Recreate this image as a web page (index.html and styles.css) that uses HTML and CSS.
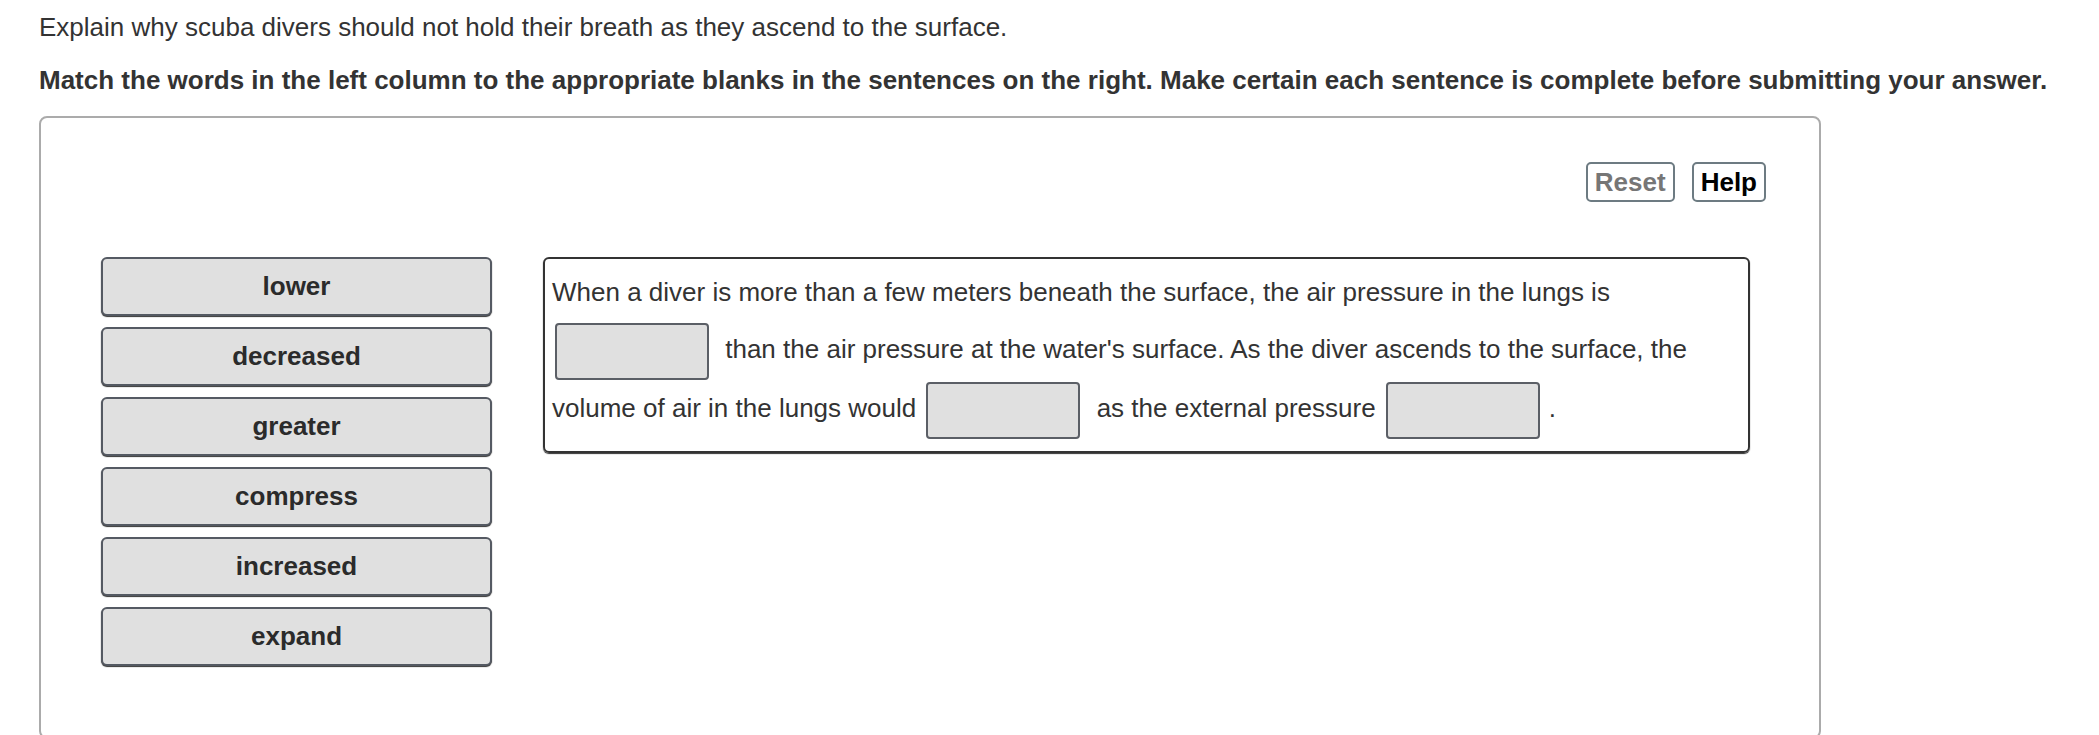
FILE: index.html
```html
<!DOCTYPE html>
<html lang="en">
<head>
    <meta charset="UTF-8">
    <meta name="viewport" content="width=device-width, initial-scale=1.0">
    <title>Scuba Divers - Matching</title>
    <link rel="stylesheet" href="styles.css">
</head>
<body>
    <p class="question">Explain why scuba divers should not hold their breath as they ascend to the surface.</p>
    <p class="instructions">Match the words in the left column to the appropriate blanks in the sentences on the right. Make certain each sentence is complete before submitting your answer.</p>

    <!-- Drag and drop activity -->
    <div class="activity">
        <div class="toolbar">
            <button class="tool-btn reset">Reset</button>
            <button class="tool-btn help">Help</button>
        </div>

        <div class="workspace">
            <div class="word-bank">
                <div class="word">lower</div>
                <div class="word">decreased</div>
                <div class="word">greater</div>
                <div class="word">compress</div>
                <div class="word">increased</div>
                <div class="word">expand</div>
            </div>

            <div class="sentences">
                <p>When a diver is more than a few meters beneath the surface, the air pressure in the lungs is <span class="blank"></span> than the air pressure at the water's surface. As the diver ascends to the surface, the volume of air in the lungs would <span class="blank"></span> as the external pressure <span class="blank"></span>.</p>
            </div>
        </div>
    </div>
</body>
</html>
```

FILE: styles.css
```css
* {
    box-sizing: border-box;
}

body {
    margin: 0;
    padding: 0 39px;
    background-color: #fff;
    color: #333;
    font-family: "Liberation Sans", Arial, Helvetica, sans-serif;
    font-size: 26px;
}

.question {
    margin: 12px 0 0;
    line-height: 30px;
}

.instructions {
    margin: 23px 0 0;
    line-height: 30px;
    font-weight: bold;
}

/* Activity frame */
.activity {
    margin-top: 21px;
    width: 1782px;
    height: 623px;
    border: 2px solid #ababab;
    border-radius: 8px;
    padding: 44px 53px 0 60px;
}

.toolbar {
    display: flex;
    justify-content: flex-end;
    gap: 17px;
}

.tool-btn {
    height: 40px;
    padding: 0 7px;
    background-color: #fff;
    border: 2px solid #6d7b82;
    border-radius: 5px;
    font-family: "Liberation Sans", Arial, Helvetica, sans-serif;
    font-size: 26px;
    font-weight: bold;
    cursor: pointer;
}

.reset {
    color: #767676;
}

.help {
    color: #000;
}

.workspace {
    display: flex;
    align-items: flex-start;
    gap: 51px;
    margin-top: 55px;
}

/* Left column of draggable words */
.word-bank {
    width: 391px;
    display: flex;
    flex-direction: column;
    gap: 11px;
}

.word {
    height: 59px;
    display: flex;
    align-items: center;
    justify-content: center;
    background-color: #e0e0e0;
    border: 2px solid #555a63;
    border-radius: 6px;
    box-shadow: 0 1px 1px #333;
    color: #2b2b2b;
    font-weight: bold;
    cursor: pointer;
}

/* Sentence with blanks */
.sentences {
    width: 1207px;
    border: 2px solid #333;
    border-radius: 6px;
    box-shadow: 0 1px 1px #333;
    padding: 5px 8px 12px 7px;
}

.sentences p {
    margin: 0;
    line-height: 57px;
}

.blank {
    display: inline-block;
    width: 154px;
    height: 57px;
    margin: 0 9px 0 3px;
    vertical-align: -22px;
    background-color: #e0e0e0;
    border: 2px solid #5b5f66;
    border-radius: 4px;
}
```
